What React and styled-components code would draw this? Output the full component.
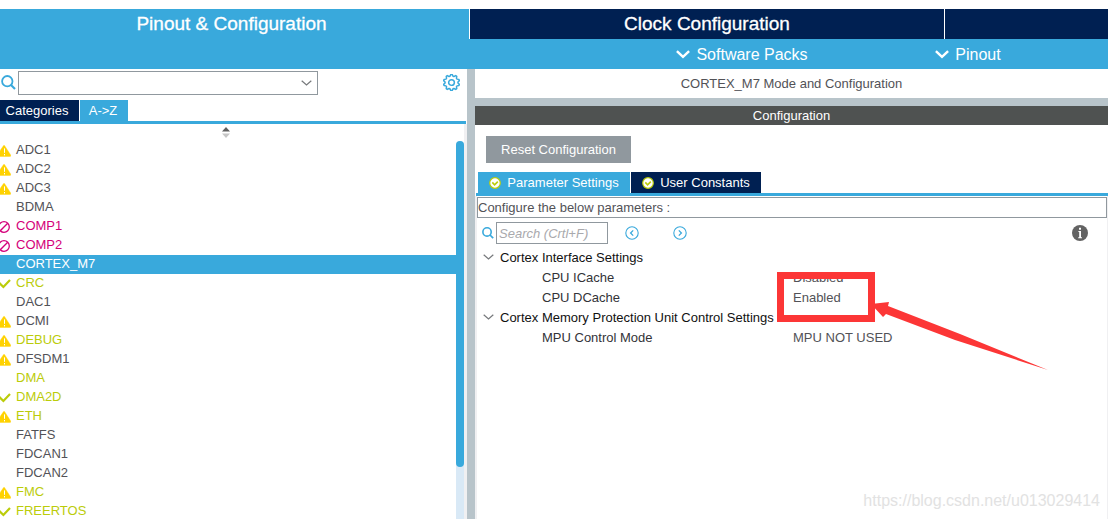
import React, { useState } from "react";
import styled, { createGlobalStyle } from "styled-components";

const c = {
  blue: "#39a9dc",
  navy: "#002052",
  divider: "#b8c4ca",
  dark: "#4f5251",
  grey: "#90989e",
  text: "#525257",
  green: "#bbcc0a",
  pink: "#d4007a",
  yellow: "#ffd200",
  red: "#fc3636",
};

const GlobalStyle = createGlobalStyle`
  * { box-sizing: border-box; }
  body { margin: 0; background: #fff; }
  body, button, input, select, table {
    font-family: "Liberation Sans", Arial, sans-serif;
    font-size: 13px;
    color: ${c.text};
  }
  button { border: 0; padding: 0; margin: 0; background: none; cursor: pointer; }
  svg { display: block; flex: none; }
`;

const Page = styled.div`
  position: relative;
  display: flex;
  flex-direction: column;
  height: 100vh;
  padding-top: 9px;
  overflow: hidden;
`;

const MainTabs = styled.nav`
  display: grid;
  grid-template-columns: 469fr 474fr 163fr;
  gap: 1px;
  flex: none;
  height: 30px;
`;

const MainTab = styled.button`
  background: ${(p) => (p.$active ? c.blue : c.navy)};
  color: #fff;
  font-size: 19px;
  line-height: 30px;
  padding-right: ${(p) => (p.$active ? "6px" : "0")};
  -webkit-text-stroke: 0.3px #fff;
`;

const SubBar = styled.div`
  display: flex;
  justify-content: flex-end;
  flex: none;
  height: 30px;
  padding-right: 27px;
  background: ${c.blue};
`;

const SubMenu = styled.button`
  display: flex;
  align-items: center;
  justify-content: center;
  gap: 6px;
  width: 226px;
  padding-top: 1px;
  color: #fff;
  font-size: 16px;
`;

const Workspace = styled.div`
  display: grid;
  grid-template-columns: 467fr 641fr;
  flex: 1;
  min-height: 0;
`;

const Sidebar = styled.aside`
  display: flex;
  flex-direction: column;
  min-width: 0;
  min-height: 0;
`;

const FilterRow = styled.div`
  display: flex;
  align-items: flex-start;
  flex: none;
  height: 31px;
  padding: 2px 7px 0 1px;
`;

const FilterLabel = styled.label`
  width: 17px;
  padding-top: 4px;
`;

const Combo = styled.div`
  display: grid;
  width: 300px;
  height: 24px;
  align-items: center;

  > * { grid-area: 1 / 1; }
  > svg { justify-self: end; margin-right: 6px; pointer-events: none; }
`;

const ComboSelect = styled.select`
  appearance: none;
  width: 100%;
  height: 100%;
  padding: 0 20px 0 4px;
  border: 1px solid ${c.grey};
  border-radius: 0;
  background: #fff;
`;

const GearButton = styled.button`
  margin: 3px 0 0 auto;
`;

const TabStrip = styled.div`
  display: flex;
  gap: 1px;
  flex: none;
  padding-left: ${(p) => p.$indent || "0"};
  border-bottom: 3px solid ${c.blue};
`;

const Tab = styled.button`
  display: flex;
  align-items: center;
  justify-content: center;
  gap: 6px;
  width: ${(p) => p.$width};
  height: 21px;
  padding-right: ${(p) => p.$pad || "0"};
  background: ${(p) => (p.$active ? c.blue : c.navy)};
  color: #fff;
  white-space: nowrap;
`;

const SideTabs = styled.div`
  padding-right: 1px;
`;

const ListArea = styled.div`
  display: flex;
  flex: 1;
  min-height: 0;
  border-right: 3px solid #f0f0f2;
`;

const ListColumn = styled.div`
  flex: 1;
  min-width: 0;
  overflow: hidden;
`;

const SortButton = styled.button`
  display: flex;
  justify-content: center;
  width: 100%;
  height: 17px;
  padding: 3px 5px 0 0;
`;

const List = styled.ul`
  margin: 0;
  padding: 0;
  list-style: none;
`;

const tones = { plain: c.text, green: c.green, pink: c.pink };

const Peripheral = styled.button`
  display: flex;
  align-items: center;
  width: 100%;
  height: 19px;
  padding-bottom: 2px;
  background: ${(p) => (p.$selected ? c.blue : "transparent")};
  color: ${(p) => (p.$selected ? "#fff" : tones[p.$tone])};
`;

const StatusSlot = styled.span`
  width: 16px;
  padding-top: 2px;
`;

const ScrollTrack = styled.div`
  width: 8px;
  margin-top: 17px;
  border-radius: 4px 4px 0 0;
  background: #d9e9f6;
`;

const ScrollThumb = styled.div`
  height: 86.3%;
  border-radius: 4px;
  background: ${c.blue};
`;

const Detail = styled.main`
  display: flex;
  flex-direction: column;
  min-width: 0;
  border-left: 8px solid ${c.divider};
`;

const DetailTitle = styled.h1`
  flex: none;
  margin: 0;
  border-bottom: 8px solid ${c.divider};
  font-size: 13px;
  font-weight: 400;
  line-height: 29px;
  text-align: center;
`;

const SectionTitle = styled.h2`
  flex: none;
  margin: 0;
  background: ${c.dark};
  color: #fff;
  font-size: 13px;
  font-weight: 400;
  line-height: 19px;
  text-align: center;
`;

const Actions = styled.div`
  flex: none;
  padding: 11px 11px 9px;
`;

const ResetButton = styled.button`
  width: 145px;
  height: 27px;
  background: ${c.grey};
  color: #fff;
`;

const ParamTabs = styled.div`
  padding-left: 1px;
`;

const Panel = styled.section`
  flex: 1;
  padding-top: 1px;
  border-left: 2px solid #f0f0f2;
  border-right: 1px solid #f0f0f2;
`;

const Hint = styled.p`
  margin: 0;
  border: 1px solid ${c.grey};
  line-height: 19px;
`;

const SearchRow = styled.div`
  display: flex;
  align-items: center;
  height: 30px;
  padding: 0 19px 0 5px;
`;

const SearchInput = styled.input`
  width: 112px;
  height: 22px;
  margin: 0 17px 0 2px;
  padding: 0 2px;
  border: 1px solid ${c.grey};
  border-radius: 0;

  &::placeholder { color: #a9a9ad; font-style: italic; opacity: 1; }
`;

const StepButton = styled.button`
  margin-right: 34px;
`;

const InfoButton = styled.button`
  margin-left: auto;
`;

const ParamTable = styled.table`
  width: 100%;
  border-collapse: collapse;
  table-layout: fixed;

  th, td { height: 20px; padding: 0 0 2px; font-weight: 400; text-align: left; white-space: nowrap; }
`;

const NameColumn = styled.col`
  width: 316px;
`;

const GroupButton = styled.button`
  display: flex;
  align-items: center;
  gap: 6px;
  padding-left: 6px;
  color: #111;
`;

const ParamName = styled.th`
  && { padding-left: 65px; }
  color: #333338;
`;

const Highlight = styled.div`
  position: absolute;
  left: 777px;
  top: 272px;
  width: 98px;
  height: 50px;
  border: 7px solid ${c.red};
  pointer-events: none;
`;

const Arrow = styled.svg`
  position: absolute;
  left: 870px;
  top: 298px;
  pointer-events: none;
`;

const Watermark = styled.span`
  position: absolute;
  right: 8px;
  bottom: 8px;
  color: #e2e2e2;
  font-size: 16px;
  line-height: 20px;
`;

const Chevron = ({ w = 11, h = 6, color = "#77797c", stroke = 1.2 }) => (
  <svg width={w} height={h} viewBox={`0 0 ${w} ${h}`} fill="none" stroke={color} strokeWidth={stroke}>
    <path d={`M.7 .7 L${w / 2} ${h - 1} L${w - 0.7} .7`} />
  </svg>
);

const MenuChevron = () => (
  <svg width="14" height="9" viewBox="0 0 14 9" fill="none" stroke="#fff" strokeWidth="2.4">
    <path d="M.9 1.2 L7 6.9 L13.1 1.2" />
  </svg>
);

const Magnifier = ({ size = 15 }) => (
  <svg width={size} height={size} viewBox="0 0 15 15" fill="none" stroke={c.blue} strokeWidth={size < 15 ? 2 : 1.8}>
    <circle cx="6.3" cy="6.2" r="5.2" />
    <path d="M10 10 L14 14" strokeWidth="2.2" />
  </svg>
);

const gearPath = Array.from({ length: 40 }, (_, i) => {
  const angle = ((i - 0.5) / 40) * Math.PI * 2;
  const r = i % 4 < 2 ? 7.6 : 6.1;
  return `${i ? "L" : "M"}${(8 + r * Math.sin(angle)).toFixed(2)} ${(8 - r * Math.cos(angle)).toFixed(2)}`;
}).join(" ");

const Gear = () => (
  <svg width="17" height="17" viewBox="0 0 16 16" fill="none" stroke={c.blue} strokeWidth="1.4" strokeLinejoin="round">
    <path d={`${gearPath} Z`} />
    <circle cx="8" cy="8" r="2.7" />
  </svg>
);

const SortArrows = () => (
  <svg width="8" height="11" viewBox="0 0 8 11">
    <path d="M4 0 L8 4.5 H0 Z" fill="#606060" />
    <path d="M0 6.5 H8 L4 11 Z" fill="#c6c6c6" />
  </svg>
);

const StatusIcon = ({ kind }) => {
  if (kind === "warn")
    return (
      <svg width="11" height="12" viewBox="0 0 11 12">
        <path d="M4.5 .5 L10.8 10.2 Q11 11.6 9.8 11.6 H-1 V7.2 L3.6 .5 Z" fill={c.yellow} stroke={c.yellow} strokeWidth=".4" />
        <path d="M4.5 3.4 V7.8 M4.5 9 V10.4" stroke="#fff" strokeWidth="1" />
      </svg>
    );
  if (kind === "blocked")
    return (
      <svg width="11" height="12" viewBox="0 0 11 12" fill="none" stroke={c.pink} strokeWidth="1.3">
        <circle cx="4" cy="6" r="5.3" />
        <path d="M.3 9.7 L7.7 2.3" />
      </svg>
    );
  if (kind === "ok")
    return (
      <svg width="11" height="12" viewBox="0 0 11 12" fill="none" stroke={c.green} strokeWidth="2.2">
        <path d="M-1 4.6 L3.4 9 L10 2" />
      </svg>
    );
  return null;
};

const CheckBadge = () => (
  <svg width="12" height="12" viewBox="0 0 12 12" fill="none">
    <circle cx="6" cy="6" r="5.3" fill="#fff" stroke={c.green} strokeWidth="1.2" />
    <path d="M3.3 5.4 L5.6 7.8 L8.8 4.6" stroke={c.green} strokeWidth="1.6" />
  </svg>
);

const StepIcon = ({ next }) => (
  <svg width="14" height="14" viewBox="0 0 14 14" fill="none" stroke={c.blue} strokeWidth="1.1">
    <circle cx="7" cy="7" r="6.2" />
    <path d={next ? "M5.8 4.4 L8.4 7 L5.8 9.6" : "M8.2 4.4 L5.6 7 L8.2 9.6"} strokeWidth="1.3" />
  </svg>
);

const InfoIcon = () => (
  <svg width="16" height="16" viewBox="0 0 16 16">
    <circle cx="8" cy="8" r="8" fill="#636363" />
    <path d="M7 2.8 H9 V4.8 H7 Z M6.4 6 H9 V12.2 H10 V13.2 H6.2 V12.2 H7.2 V7 H6.4 Z" fill="#fff" />
  </svg>
);

const peripherals = [
  ["ADC1", "plain", "warn"],
  ["ADC2", "plain", "warn"],
  ["ADC3", "plain", "warn"],
  ["BDMA", "plain"],
  ["COMP1", "pink", "blocked"],
  ["COMP2", "pink", "blocked"],
  ["CORTEX_M7", "plain"],
  ["CRC", "green", "ok"],
  ["DAC1", "plain"],
  ["DCMI", "plain", "warn"],
  ["DEBUG", "green", "warn"],
  ["DFSDM1", "plain", "warn"],
  ["DMA", "green"],
  ["DMA2D", "green", "ok"],
  ["ETH", "green", "warn"],
  ["FATFS", "plain"],
  ["FDCAN1", "plain"],
  ["FDCAN2", "plain"],
  ["FMC", "green", "warn"],
  ["FREERTOS", "green", "ok"],
];

const groups = [
  {
    title: "Cortex Interface Settings",
    params: [
      ["CPU ICache", "Disabled"],
      ["CPU DCache", "Enabled"],
    ],
  },
  {
    title: "Cortex Memory Protection Unit Control Settings",
    params: [["MPU Control Mode", "MPU NOT USED"]],
  },
];

export default function App() {
  const [selected, setSelected] = useState("CORTEX_M7");

  return (
    <>
      <GlobalStyle />
      <Page>
        <MainTabs>
          <MainTab $active>Pinout &amp; Configuration</MainTab>
          <MainTab>Clock Configuration</MainTab>
          <MainTab aria-label="More" />
        </MainTabs>
        <SubBar>
          <SubMenu>
            <MenuChevron />
            Software Packs
          </SubMenu>
          <SubMenu>
            <MenuChevron />
            Pinout
          </SubMenu>
        </SubBar>
        <Workspace>
          <Sidebar>
            <FilterRow>
              <FilterLabel htmlFor="filter" aria-label="Find">
                <Magnifier />
              </FilterLabel>
              <Combo>
                <ComboSelect id="filter" defaultValue="">
                  <option value="" />
                </ComboSelect>
                <Chevron />
              </Combo>
              <GearButton aria-label="Settings">
                <Gear />
              </GearButton>
            </FilterRow>
            <SideTabs>
              <TabStrip>
                <Tab $width="79px" $pad="5px">Categories</Tab>
                <Tab $width="48px" $pad="2px" $active>A-&gt;Z</Tab>
              </TabStrip>
            </SideTabs>
            <ListArea>
              <ListColumn>
                <SortButton aria-label="Sort">
                  <SortArrows />
                </SortButton>
                <List>
                  {peripherals.map(([name, tone, status]) => (
                    <li key={name}>
                      <Peripheral $tone={tone} $selected={name === selected} onClick={() => setSelected(name)}>
                        <StatusSlot>
                          <StatusIcon kind={status} />
                        </StatusSlot>
                        {name}
                      </Peripheral>
                    </li>
                  ))}
                </List>
              </ListColumn>
              <ScrollTrack>
                <ScrollThumb />
              </ScrollTrack>
            </ListArea>
          </Sidebar>
          <Detail>
            <DetailTitle>CORTEX_M7 Mode and Configuration</DetailTitle>
            <SectionTitle>Configuration</SectionTitle>
            <Actions>
              <ResetButton>Reset Configuration</ResetButton>
            </Actions>
            <ParamTabs>
              <TabStrip $indent="2px">
                <Tab $width="152px" $active>
                  <CheckBadge />
                  Parameter Settings
                </Tab>
                <Tab $width="130px">
                  <CheckBadge />
                  User Constants
                </Tab>
              </TabStrip>
            </ParamTabs>
            <Panel>
              <Hint>Configure the below parameters :</Hint>
              <SearchRow>
                <label htmlFor="param-search" aria-label="Search">
                  <Magnifier size={12} />
                </label>
                <SearchInput id="param-search" placeholder="Search (Crtl+F)" />
                <StepButton aria-label="Previous">
                  <StepIcon />
                </StepButton>
                <StepButton aria-label="Next">
                  <StepIcon next />
                </StepButton>
                <InfoButton aria-label="Information">
                  <InfoIcon />
                </InfoButton>
              </SearchRow>
              <ParamTable>
                <colgroup>
                  <NameColumn />
                  <col />
                </colgroup>
                {groups.map((group) => (
                  <tbody key={group.title}>
                    <tr>
                      <th colSpan={2} scope="rowgroup">
                        <GroupButton aria-expanded="true">
                          <Chevron />
                          {group.title}
                        </GroupButton>
                      </th>
                    </tr>
                    {group.params.map(([name, value]) => (
                      <tr key={name}>
                        <ParamName scope="row">{name}</ParamName>
                        <td>{value}</td>
                      </tr>
                    ))}
                  </tbody>
                ))}
              </ParamTable>
            </Panel>
          </Detail>
        </Workspace>
        <Highlight />
        <Arrow width="180" height="74" viewBox="0 0 180 74">
          <path d="M1 6 L19 4 L18 8 L90 36 L178 72 L85 42 L16 16 L13 19 Z" fill={c.red} />
        </Arrow>
        <Watermark>https://blog.csdn.net/u013029414</Watermark>
      </Page>
    </>
  );
}
